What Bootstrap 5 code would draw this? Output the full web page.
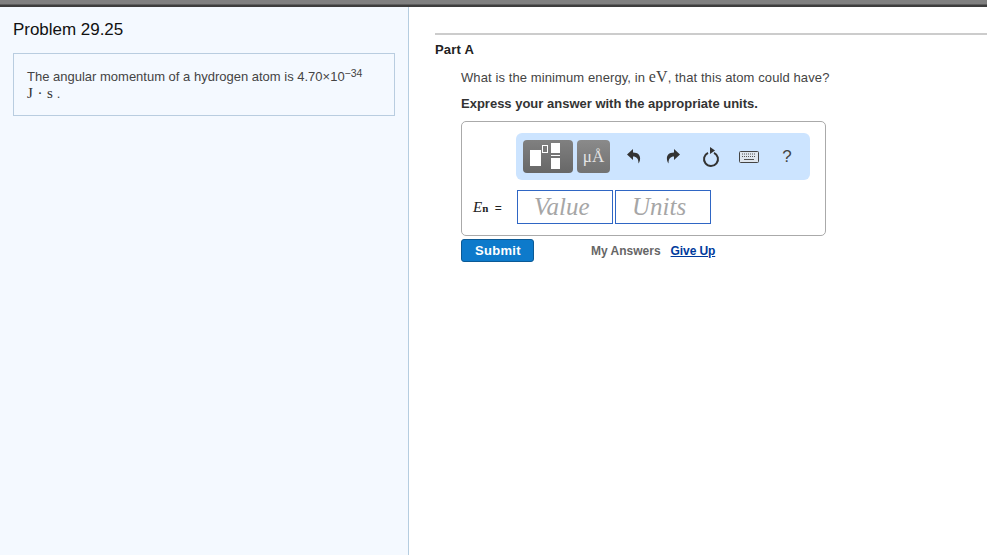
<!DOCTYPE html>
<html lang="en">
<head>
<meta charset="utf-8">
<title>Problem 29.25</title>
<link href="https://cdn.jsdelivr.net/npm/bootstrap@5.3.0/dist/css/bootstrap.min.css" rel="stylesheet">
<style>
html,body{height:555px;overflow:hidden;background:#fff;}
body{font-family:"Liberation Sans",Arial,sans-serif;color:#444;font-size:13px;}
.topbar{height:7px;background:linear-gradient(#808080 0,#808080 4px,#3d3d3d 5px,#3d3d3d 7px);}
.shell{height:548px;}
.leftpane{width:409px;flex:none;background:#f4f9ff;border-right:1px solid #b5cde0;padding:13px 13px 0;}
.probtitle{font-size:17px;line-height:20px;color:#111;margin:0 0 13px;font-weight:400;letter-spacing:-.03px;}
.statement{width:382px;height:63px;border:1px solid #b9cde0;padding:15px 13px 0;line-height:16px;}
.statement .expo{font-size:10.5px;line-height:0;position:relative;top:-4px;}
.statement .mathserif{font-size:15px;color:#333;letter-spacing:.4px;}
.mathserif{font-family:"Liberation Serif",serif;}
.rightpane{padding:26px 0 0 26px;}
.rule{height:2px;background:#ccc;margin:0 0 7px;}
.partname{font-size:13px;font-weight:700;color:#222;line-height:16px;margin:0 0 11px;letter-spacing:.2px;}
.partbody{margin-left:26px;width:365px;}
.question{line-height:18px;margin:0 0 8px;letter-spacing:.1px;white-space:nowrap;}
.question .mathserif{font-size:16px;line-height:1;}
.instruction{font-weight:700;color:#333;line-height:18px;margin:0 0 8px;}
.answerbox{height:115px;border:1px solid #aaa;border-radius:5px;padding:11px 15px 0 54px;}
.toolstrip{height:47px;background:#cce4ff;border-radius:6px;padding:7px;}
.toolbtn{height:33px;border-radius:4px;}
.tb-wide{width:50px;margin-right:4px;background:linear-gradient(#808080,#676767);}
.tb-unit{width:33px;color:#e4e4e4;background:linear-gradient(#8a8a8a,#727272);font-family:"Liberation Serif",serif;font-size:17px;line-height:33px;text-align:center;}
.toolicon{flex:none;}
.qmark{font-size:17px;line-height:20px;color:#444;width:12px;text-align:center;}
.gap-undo{margin-left:17px;}
.gap-redo{margin-left:25px;}
.gap-reload{margin-left:22px;}
.gap-keys{margin-left:19px;}
.gap-help{margin-left:22px;}
.inputrow{margin:10px 0 0 -43px;}
.varlabel{width:44px;font-family:"Liberation Serif",serif;font-size:14px;color:#222;}
.varlabel i{font-size:15px;}
.varlabel b{font-size:11px;}
.varlabel span{font-family:"Liberation Sans",sans-serif;font-size:12px;margin-left:3px;}
.slot{width:96px;height:34px;border:1px solid #2f66c4;margin-right:2px;padding-left:16px;font-family:"Liberation Serif",serif;font-style:italic;font-size:25px;line-height:32px;color:#a6a6a6;}
.actions{margin-top:3px;}
.submitbtn{width:73px;height:23px;padding:0 0 0 1px;background:#0d7acb;border:1px solid #0b5a96;border-radius:3px;color:#fff;font-weight:700;font-size:13px;line-height:20px;letter-spacing:.3px;}
.myanswers{margin-left:57px;font-size:12px;font-weight:700;color:#666;}
.giveup{margin-left:10px;font-size:12px;font-weight:700;color:#003a9c;text-decoration:underline;letter-spacing:-.1px;}
</style>
</head>
<body>
<div class="topbar"></div>
<div class="shell d-flex">
  <aside class="leftpane">
    <h1 class="probtitle">Problem 29.25</h1>
    <div class="statement">The angular momentum of a hydrogen atom is 4.70×10<span class="expo">−34</span><br><span class="mathserif">J · s</span> .</div>
  </aside>
  <main class="rightpane flex-grow-1">
    <div class="rule"></div>
    <h2 class="partname">Part A</h2>
    <div class="partbody">
      <p class="question">What is the minimum energy, in <span class="mathserif">eV</span>, that this atom could have?</p>
      <p class="instruction">Express your answer with the appropriate units.</p>
      <div class="answerbox">
        <div class="toolstrip d-flex align-items-center">
          <div class="toolbtn tb-wide">
            <svg class="d-block" width="50" height="33" viewBox="0 0 50 33" aria-hidden="true">
              <rect x="7" y="10" width="11" height="16" fill="#fff"/>
              <rect x="19.500" y="5.500" width="5" height="7" fill="none" stroke="#fff"/>
              <rect x="28" y="3" width="9" height="10" fill="#fff"/>
              <rect x="28" y="15" width="9" height="1" fill="#fff"/>
              <rect x="28" y="18" width="9" height="11" fill="#fff"/>
            </svg>
          </div>
          <div class="toolbtn tb-unit">μÅ</div>
          <svg class="toolicon gap-undo" width="14" height="15" viewBox="0 0 14 15" aria-hidden="true"><path d="M6 0 0 5.500 6 11V7.500c3.500 0 5.500 2 5.500 7C14 11 14.500 3.500 6 3.500z" fill="#333"/></svg>
          <svg class="toolicon gap-redo" width="14" height="15" viewBox="0 0 14 15" aria-hidden="true"><path d="M8 0l6 5.500L8 11V7.500c-3.500 0-5.500 2-5.500 7C0 11-.5 3.500 8 3.500z" fill="#333"/></svg>
          <svg class="toolicon gap-reload" width="18" height="22" viewBox="0 0 18 22" aria-hidden="true"><path d="M12 6.800A7 7 0 1 1 6 6.800" fill="none" stroke="#333" stroke-width="2"/><path d="M8 1l5 3.500L8 8z" fill="#333"/></svg>
          <svg class="toolicon gap-keys" width="20" height="12" viewBox="0 0 20 12" aria-hidden="true"><rect x=".5" y=".5" width="19" height="11" rx="1" fill="#dfe6ee" stroke="#444"/><path d="M3 3h14M3 5.500h14" stroke="#555" stroke-dasharray="1 1"/><path d="M5 8.500h10" stroke="#555"/></svg>
          <div class="qmark gap-help">?</div>
        </div>
        <div class="inputrow d-flex align-items-center">
          <div class="varlabel"><i>E</i><b>n</b><span> =</span></div>
          <div class="slot">Value</div>
          <div class="slot">Units</div>
        </div>
      </div>
      <div class="actions d-flex align-items-center">
        <button type="button" class="btn submitbtn">Submit</button>
        <span class="myanswers">My Answers</span>
        <a class="giveup" href="#">Give Up</a>
      </div>
    </div>
  </main>
</div>
</body>
</html>
